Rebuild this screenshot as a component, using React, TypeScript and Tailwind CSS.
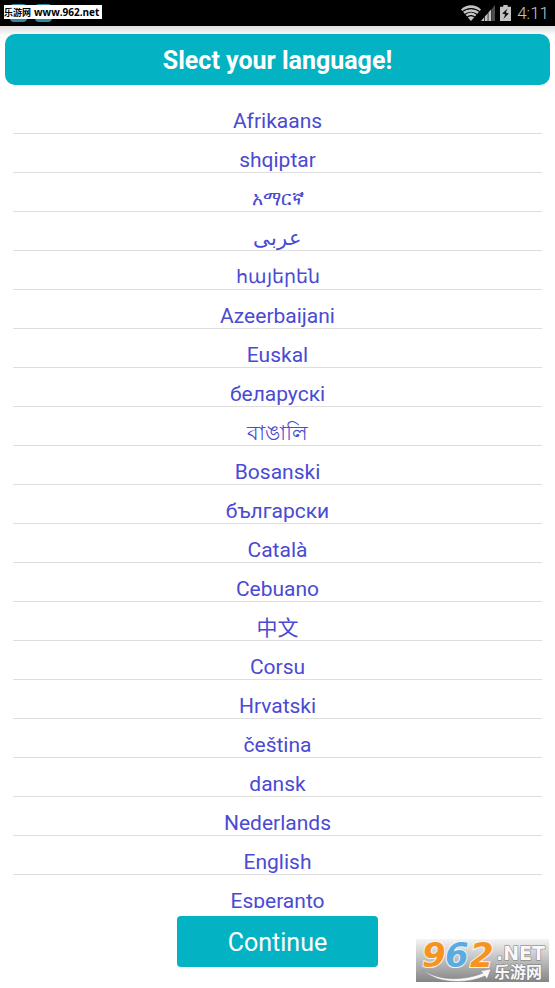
import clsx from "clsx";
import { useState } from "react";

const languages = [
  { code: "af", name: "Afrikaans" },
  { code: "sq", name: "shqiptar" },
  { code: "am", name: "አማርኛ", wide: true },
  { code: "ar", name: "عربى" },
  { code: "hy", name: "հայերեն", wide: true },
  { code: "az", name: "Azeerbaijani" },
  { code: "eu", name: "Euskal" },
  { code: "be", name: "беларускі" },
  { code: "bn", name: "বাঙালি" },
  { code: "bs", name: "Bosanski" },
  { code: "bg", name: "български" },
  { code: "ca", name: "Català" },
  { code: "ceb", name: "Cebuano" },
  { code: "zh", name: "中文" },
  { code: "co", name: "Corsu" },
  { code: "hr", name: "Hrvatski" },
  { code: "cs", name: "čeština" },
  { code: "da", name: "dansk" },
  { code: "nl", name: "Nederlands" },
  { code: "en", name: "English" },
  { code: "eo", name: "Esperanto" },
];

function WifiIcon() {
  return (
    <svg width="20" height="16" viewBox="0 0 20 16" fill="none">
      <path d="M0 4.4C6 -1 14 -1 20 4.4L10 16Z" fill="#c4c4c4" />
      <g stroke="#000000" strokeWidth="1.2">
        <path d="M1 6.9C6.4 2.4 13.6 2.4 19 6.9" />
        <path d="M3.4 9.8C7.4 6.4 12.6 6.4 16.6 9.8" />
        <path d="M5.6 12.4C8.4 10.2 11.6 10.2 14.4 12.4" />
      </g>
    </svg>
  );
}

function SignalIcon() {
  return (
    <svg width="14" height="16" viewBox="0 0 14 16">
      <path d="M0 16L3 12.6V16Z M3.7 16V11.8L6.7 8.3V16Z M7.4 16V7.5L10.3 4.2V16Z" fill="#c4c4c4" />
      <path d="M11 16V3.4L14 0V16Z" fill="#4c4c4c" />
    </svg>
  );
}

function BatteryIcon() {
  return (
    <svg width="11" height="16" viewBox="0 0 11 16">
      <path d="M3.3 0H7.7V1.7H11V16H0V1.7H3.3Z" fill="#c4c4c4" />
      <path d="M7.6 3.4L2.2 8.6L5.2 9.6L3.4 14L8.8 8.6L5.8 7.6Z" fill="#111111" />
    </svg>
  );
}

function StatusBar() {
  return (
    <div className="relative flex h-[26px] shrink-0 items-center justify-end bg-black pr-[6px]">
      {/* notification icons, mostly under the site label */}
      <div className="absolute top-1 left-[10px] flex gap-2">
        <span className="h-[18px] w-[17px] rounded-sm bg-[#2f86a6]" />
        <span className="h-[18px] w-[17px] rounded-sm bg-[#2f86a6]" />
      </div>
      <div className="absolute top-[5px] left-1 flex h-[14px] w-[98px] items-center gap-[3px] bg-white font-['Open_Sans','Noto_Sans_CJK_SC',sans-serif] text-[9px] leading-none font-bold whitespace-nowrap text-black">
        <span>乐游网</span>
        <span className="text-[10px]">www.962.net</span>
      </div>
      <WifiIcon />
      <SignalIcon />
      <span className="ml-[5px]">
        <BatteryIcon />
      </span>
      <span className="ml-[6px] text-[17px] leading-none font-light text-[#c4c4c4]">4:11</span>
    </div>
  );
}

function Watermark() {
  return (
    <svg
      className="absolute right-[6px] bottom-[6px] overflow-visible"
      width="133"
      height="43"
      viewBox="0 0 133 43"
      role="img"
      aria-label="962.NET 乐游网"
    >
      <defs>
        <linearGradient id="plate" x1="0" y1="0" x2="0" y2="1">
          <stop offset="0" stopColor="#f4f4f4" />
          <stop offset="0.5" stopColor="#bdbdbd" />
          <stop offset="1" stopColor="#858585" />
        </linearGradient>
      </defs>
      <rect width="133" height="43" fill="url(#plate)" />
      <path
        d="M7 31C22 42 48 42 67 34L64 32L75 30L71 40L69 37C48 46 20 44 7 31Z"
        fill="#f8f8f8"
        stroke="#858585"
        strokeWidth="0.5"
      />
      <g
        fontFamily="'DejaVu Sans', sans-serif"
        fontSize="34"
        fontWeight="700"
        fontStyle="italic"
        stroke="#f4f4f4"
        strokeWidth="2"
        paintOrder="stroke"
      >
        <text x="6" y="28" fill="#f79420">
          9
        </text>
        <text x="29" y="28" fill="#5aabe0">
          6
        </text>
        <text x="54" y="28" fill="#f79420">
          2
        </text>
      </g>
      <g fill="#f8f8f8" stroke="#777777" strokeWidth="1" paintOrder="stroke">
        <text x="80" y="21" fontFamily="'DejaVu Sans', sans-serif" fontSize="19" fontWeight="700">
          .NET
        </text>
        <text x="78" y="39" fontFamily="'Noto Sans CJK SC', sans-serif" fontSize="16" fontWeight="700">
          乐游网
        </text>
      </g>
    </svg>
  );
}

export default function App() {
  const [selected, setSelected] = useState("");

  return (
    <div className="relative flex h-screen flex-col overflow-hidden bg-white font-[Roboto,'Noto_Sans','Noto_Sans_CJK_SC',sans-serif]">
      <StatusBar />

      <main className="flex min-h-0 flex-1 flex-col">
        <header className="bg-linear-to-b from-[#dedede] to-white to-[10px] px-[5px] pt-2">
          <h1 className="rounded-[10px] bg-[#03b2c3] pt-[3px] text-center text-[25px] leading-[48px] font-bold text-white">
            Slect your language!
          </h1>
        </header>

        <ul className="mx-[13px] mt-[10px] min-h-0 flex-1 overflow-hidden">
          {languages.map((language) => (
            <li key={language.code} className="border-b border-[#dedede]">
              <button
                type="button"
                lang={language.code}
                aria-pressed={selected === language.code}
                onClick={() => setSelected(language.code)}
                className={clsx(
                  "block h-[38px] w-full pt-[13px] text-center leading-6 text-[#4a4ad2]",
                  language.wide ? "text-[19px]" : "text-[21px]",
                )}
              >
                {language.name}
              </button>
            </li>
          ))}
        </ul>

        <footer className="flex justify-center pt-2 pb-[21px]">
          <button
            type="button"
            className="w-[201px] rounded-[4px] bg-[#03b2c3] pt-[3px] text-[25px] leading-[48px] text-white"
          >
            Continue
          </button>
        </footer>
      </main>

      <Watermark />
    </div>
  );
}
